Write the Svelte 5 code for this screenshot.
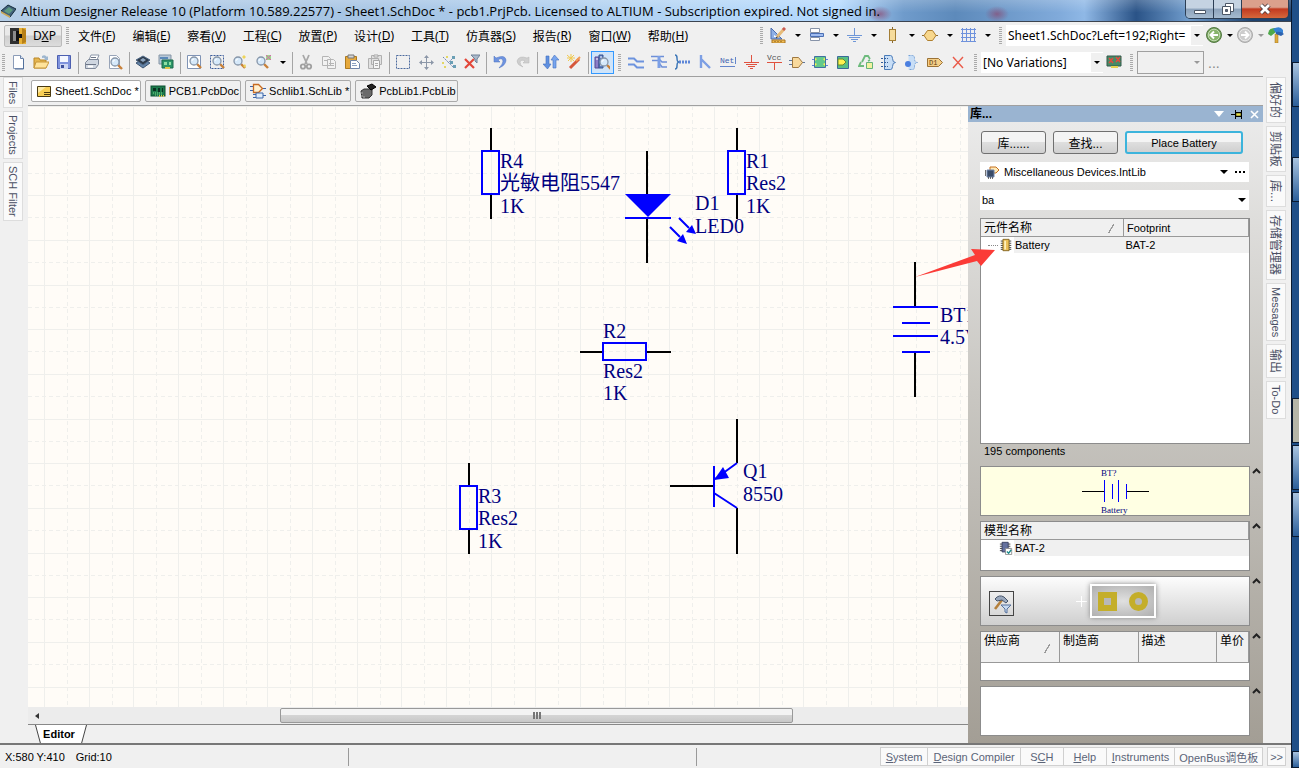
<script>
    const menus = [
        ['文件', 'F'], ['编辑', 'E'], ['察看', 'V'], ['工程', 'C'], ['放置', 'P'], ['设计', 'D'],
        ['工具', 'T'], ['仿真器', 'S'], ['报告', 'R'], ['窗口', 'W'], ['帮助', 'H']
    ];

    const drawTools = ['draft', 'align', 'power', 'resistor', 'opamp', 'grid'];

    const mainTools = [
        'new', 'open', 'save', '|', 'print', 'preview', '|', 'layers', 'board', '|',
        'zoomDoc', 'zoomArea', 'zoomSel', 'zoomFilter', 'v', '|',
        'cut', 'copy', 'paste', 'pasteAll', '|', 'select', 'move', 'deselect', 'clear', '|',
        'undo', 'redo', '|', 'updown', 'wand', '|', 'browse'
    ];

    const wiringTools = [
        'wire', 'bus', 'harness', 'entry', 'net', 'gnd', 'vcc', 'part', 'sheet', 'sheetEntry',
        'device', 'connector', 'connEntry', 'port', 'noErc'
    ];

    const docs = [
        { name: 'Sheet1.SchDoc *', icon: 'docSch', active: true },
        { name: 'PCB1.PcbDoc', icon: 'docPcb' },
        { name: 'Schlib1.SchLib *', icon: 'docSchlib' },
        { name: 'PcbLib1.PcbLib', icon: 'docPcblib' }
    ];

    const leftTabs = ['Files', 'Projects', 'SCH Filter'];
    const rightTabs = ['偏好的', '剪贴板', '库...', '存储管理器', 'Messages', '输出', 'To-Do'];

    // [before, underlined key, after]
    const panels = [
        ['', 'S', 'ystem'], ['', 'D', 'esign Compiler'], ['S', 'C', 'H'],
        ['', 'H', 'elp'], ['', 'I', 'nstruments'], ['OpenBus调色板', '', '']
    ];

    const resistors = [
        { x: 463, y: 22, lines: ['R4', '光敏电阻5547', '1K'] },
        { x: 709, y: 22, lines: ['R1', 'Res2', '1K'] },
        { x: 441, y: 357, lines: ['R3', 'Res2', '1K'] }
    ];

    // 10 grid units are 44.67px on screen at this zoom
    const step = 134 / 3;
    const cols = Array.from({ length: 60 }, (_, i) => i);

    const lens = (x, y) =>
        `<path d="M${x + 3} ${y + 3}l4 4" stroke="#c8803a" stroke-width="2.4"/><circle cx="${x}" cy="${y}" r="4" fill="#d6e9fa" stroke="#8695a8" stroke-width="1.3"/><path d="M${x - 2} ${y}a2 2 0 0 1 2-2" stroke="#fff" fill="none"/>`;
    const pcb = '<rect x="1" y="3" width="14" height="10" fill="#1d7a4c" stroke="#0c5030"/><path d="M3 5h3v3H3zM8 5h2v4H8zM12 5h1v4h-1z" fill="#0a3021"/><path d="M3 10h9M5 12h7" stroke="#7fe08a" stroke-dasharray="1 1"/><path d="M9 13h5" stroke="#d8c34a" stroke-width="2" stroke-dasharray="1 1"/>';

    const icons = {
        draft: '<path d="M1 1v11h11z" fill="#8fb0e6" stroke="#4a6cae"/><path d="M4 8v2h3z" fill="#fff"/><path d="M2 13h13v3H2z" fill="#f3bf55" stroke="#a87524"/><path d="M5 14v1M8 14v1M11 14v1" stroke="#7a5010"/><path d="M7 10l7-8" stroke="#e6bb79" stroke-width="3"/><path d="M13 3l2-2" stroke="#c95b50" stroke-width="3"/><path d="M6 11l1.500-1" stroke="#333"/>',
        align: '<path d="M2.500 1.500h9v4h-9zM2.500 10.500h9v3h-9z" fill="#fff" stroke="#8793a8"/><path d="M2.500 6.500h13v3h-13z" fill="#9fbcf0" stroke="#4a6fb5"/>',
        power: '<path d="M8.500 1v7M1 8.500h15M3 10.500h11M5 12.500h7M7 14.500h3" stroke="#6f97d8" fill="none"/>',
        resistor: '<path d="M8.500 0v16" stroke="#8a6a30"/><rect x="5.500" y="2.500" width="6" height="11" fill="#f6dc9c" stroke="#a37e35"/>',
        opamp: '<path d="M0 8.500h16" stroke="#8a6a30"/><path d="M5.500 3.500h5l3.500 5-3.500 5h-5L2 8.500z" fill="#f8d78c" stroke="#b0802f"/>',
        grid: '<path d="M2.500 1v14M6.500 1v14M10.500 1v14M14.500 1v14M1 2.500h15M1 6.500h15M1 10.500h15M1 14.500h15" stroke="#6f92dc"/>',
        new: '<path d="M3.500 1.500h7l3 3v10h-10z" fill="#fff" stroke="#8b9cb8"/><path d="M10.500 1.500v3h3" fill="#dbe6f5" stroke="#6b82a8"/><path d="M13.500 5v10H5" stroke="#52719c" fill="none"/>',
        open: '<path d="M1 4h5l1 2h6v8H1z" fill="#e5b54f" stroke="#b98728"/><path d="M3 8h13l-3 6H1z" fill="#ffe39a" stroke="#c7963a"/><path d="M9 2q3-2 5 1l1-1v4h-4l1-1q-1-2-3-1z" fill="#9db6cf"/>',
        save: '<path d="M1.500 1.500h13v13h-13z" fill="#7f93dd" stroke="#4c5fb0"/><path d="M4 2h8v6H4z" fill="#f4f7ff"/><path d="M4 10h8v5H4z" fill="#cdd6f2"/><path d="M5 11h3v3H5z" fill="#3d4f9c"/>',
        print: '<path d="M5 6l2-5h8l-2 5z" fill="#fff" stroke="#8b96a8"/><path d="M1.500 8.500l3-3h10v5l-3 4h-10z" fill="#cfd6e0" stroke="#7e8899"/><path d="M2 10.500h10M7 3.500h5" stroke="#6c7586"/><path d="M4 12.500h5" stroke="#fff" stroke-width="2"/>',
        preview: '<path d="M2.500 1.500h7l3 3v10h-10z" fill="#fff" stroke="#98a4b8"/>' + lens(8, 8),
        layers: '<path d="M1 9l7-4 7 4-7 5z" fill="#6484a8" stroke="#3e5674"/><path d="M1 6l7-4 7 4-7 5z" fill="#2e3b4b" stroke="#4f6988"/><path d="M5 6l3-2 3 2-3 2z" fill="#8da5c0"/>',
        board: '<path d="M1 1h12v9H1z" fill="#b8c8d8" stroke="#8595a5"/><path d="M2 4h8" stroke="#5a88b8" stroke-width="2"/><path d="M4 6h11v8H4z" fill="#2c9468" stroke="#1c6a4a"/><path d="M6 8h3v3H6zM11 8h2v3h-2z" fill="#8fe0a4"/><path d="M7 14h5" stroke="#e3c84c" stroke-width="2"/>',
        zoomDoc: '<path d="M1.500 1.500h13v13h-13z" fill="#fff" stroke="#7f93b5"/>' + lens(8, 7),
        zoomArea: '<path d="M1.500 1.500h13v13h-13z" fill="none" stroke="#3e5f9c" stroke-dasharray="2 1"/>' + lens(8, 7),
        zoomSel: lens(6, 7) + '<path d="M12 1l2 2-2 2-2-2zM13 10l1 2-1 2-2-2z" fill="#eed45a"/>',
        zoomFilter: lens(6, 7) + '<path d="M11 1h5v5h-5z" fill="#9ed48b"/><path d="M11 1l5 5M16 1l-5 5" stroke="#d36ba8"/>',
        cut: '<path d="M5 1l4 9M11 1L7 10" stroke="#a8a8a8" stroke-width="1.800"/><circle cx="5" cy="12.500" r="2.200" fill="none" stroke="#a0a0a0" stroke-width="1.800"/><circle cx="11" cy="12.500" r="2.200" fill="none" stroke="#a0a0a0" stroke-width="1.800"/>',
        copy: '<path d="M1.500 2.500h6l2 2v7h-8zM6.500 5.500h6l2 2v7h-8z" fill="#f2f2f2" stroke="#b5b5b5"/><path d="M8 9.500h5M8 11.500h5M3 6.500h3" stroke="#b5b5b5"/>',
        paste: '<path d="M1.500 2.500h11v12h-11z" fill="#e6a93c" stroke="#ad7a20"/><path d="M4 1h6v3H4z" fill="#d5d5d5" stroke="#777"/><path d="M6.500 6.500h6l3 3v5h-9z" fill="#fff" stroke="#7186aa"/><path d="M8 9.500h4M8 11.500h5" stroke="#8ca0c0"/>',
        pasteAll: '<path d="M4.500 1.500h10v9h-10zM1.500 4.500h10v10h-10z" fill="#e2e2e2" stroke="#b0b0b0"/><path d="M7 1h4v2H7zM6.500 6.500h6v8h-6z" fill="#f6f6f6" stroke="#a5a5a5"/><path d="M8 9.500h3M8 11.500h3" stroke="#aaa"/>',
        select: '<path d="M1.500 1.500h13v13h-13z" fill="none" stroke="#4c6b9e" stroke-dasharray="2 1"/>',
        move: '<path d="M8.500 2v13M2 8.500h13" stroke="#8c97a8"/><path d="M6 4l2.500-3L11 4zM6 13l2.500 3 2.500-3zM4 6L1 8.500 4 11zM13 6l3 2.500-3 2.500z" fill="#8c97a8"/>',
        deselect: '<path d="M2 3l11 11M13 3L7 9" stroke="#6d86b4" stroke-dasharray="2 1"/><path d="M1 8h2v2H1zM3 12h2v2H3zM5 2h2v2H5z" fill="#e3d766"/><path d="M11 2h3v3h-3zM12 11h3v3h-3zM9 7h3v3H9z" fill="#6a9fb5"/>',
        clear: '<path d="M1 5l9 9M10 5l-9 9" stroke="#e2473a" stroke-width="2.200"/><path d="M7 1h9l-3 4v4l-2-2V5z" fill="#aab9cb" stroke="#708298"/>',
        undo: '<path d="M2 2v6h6L6 6q4-3 5 1 0 3-4 7 7-3 7-8Q13 0 4 4z" fill="#6e93e0" stroke="#4a70bf" stroke-width=".5"/>',
        redo: '<path d="M14 3v6H8l2-2q-4-2-5 1 0 3 3 5-6-2-6-6 2-6 10-3z" fill="#cfcfcf" stroke="#b5b5b5" stroke-width=".5"/>',
        updown: '<path d="M3 2h3v8h2l-3.500 5L0 10h3z" fill="#6090e0" stroke="#426fc0" stroke-width=".6"/><path d="M10 14h3V6h3l-4.500-5L8 6h2z" fill="#78a5ee" stroke="#426fc0" stroke-width=".6"/>',
        wand: '<path d="M4 14l9-9" stroke="#d5573b" stroke-width="3"/><path d="M10 7l4-4" stroke="#f09a55" stroke-width="2"/><path d="M1 1l7 6M8 1L2 7M5 0v8M1 4h8" stroke="#f0c94e"/>',
        browse: '<path d="M1 3h4v11H1z" fill="#8a7fc8" stroke="#554a94"/><path d="M5 1h4v13H5z" fill="#5c7fc4" stroke="#39568f"/><path d="M2 5h2M6 3h2M6 11h2" stroke="#fff"/>' + lens(10, 8),
        wire: '<path d="M0 4.500h6l3 3h7M0 10.500h6l3 3h7" stroke="#6d93de" stroke-width="2" fill="none"/>',
        bus: '<path d="M0 2.500h13M1 6.500h7M8 5l3 3h5M8 9l3 4h5" stroke="#6d8fd8" stroke-width="1.500" fill="none"/><path d="M8 2v12" stroke="#7da0e6" stroke-width="3"/>',
        harness: '<path d="M1 1q2 0 2 3 0 4 2 4-2 0-2 4 0 3-2 3" stroke="#3f78b8" stroke-width="1.500" fill="none"/><path d="M5 8h11" stroke="#5d86d8" stroke-width="3" stroke-dasharray="2 1"/>',
        entry: '<path d="M4 1v13M4 5l9 9" stroke="#7d9fe4" stroke-width="2.400"/>',
        net: '<text x="0" y="9" font-family="Liberation Mono" font-size="8" fill="#3e62b0">Net</text><path d="M15.500 3v7M0 12.500h15" stroke="#6485cb"/>',
        gnd: '<path d="M8.500 1v7M1 8.500h15M3 10.500h11M5 12.500h7M7 14.500h3" stroke="#e0523f"/>',
        vcc: '<text x="1" y="6" font-family="Liberation Mono" font-size="8" fill="#555">Vcc</text><path d="M1 8.500h15M8.500 9v7" stroke="#e0523f"/>',
        part: '<path d="M0 6.500h4M0 10.500h4M12 8.500h4" stroke="#5f779c"/><path d="M3.500 3.500h6l4 5-4 5h-6z" fill="#f8d99c" stroke="#9f7840"/>',
        sheet: '<path d="M0 5.500h16M0 11.500h16" stroke="#5d86d8"/><path d="M2.500 2.500h11v11h-11z" fill="#62c98b" stroke="#41719f"/><path d="M3 4l2 1-2 2zM3 9l2 1-2 2zM13 4l-2 1 2 2zM13 9l-2 1 2 2z" fill="#fff24f"/>',
        sheetEntry: '<path d="M2.500 2.500h11v12h-11z" fill="#58c084" stroke="#3b6a99"/><path d="M3 5h5l3 3-3 3H3z" fill="#fff24f" stroke="#6a8a30"/>',
        device: '<path d="M4 8l3-6h3l2 3M3 8l-2 4h5M12 6l-2 1" stroke="#6dbb7d" stroke-width="1.800" fill="none"/><path d="M8.500 8.500h6v6h-6z" fill="#f2f2a0" stroke="#64b478"/>',
        connector: '<path d="M3.500 1.500h6q2 0 2 3 0 4 3 4-3 0-3 4 0 3-2 3h-6z" fill="#c8def6" stroke="#4a7cba"/><path d="M0 4.500h7M0 8.500h7M0 12.500h7" stroke="#345f9c" stroke-dasharray="2 1"/>',
        connEntry: '<path d="M4.500 1.500h4q2 0 2 3 0 4 3 4-3 0-3 4 0 3-2 3h-4" fill="#c8def6" stroke="#78a2d6" stroke-dasharray="2 1"/><circle cx="4" cy="10" r="3" fill="#4b7fe0"/>',
        port: '<path d="M.5 4.500h11l4 4-4 4H.5z" fill="#f5cf88" stroke="#9b7236"/><text x="2" y="11" font-family="Liberation Mono" font-size="7" fill="#5c3d10">D1</text>',
        noErc: '<path d="M3 3l10 11M13 3L3 14" stroke="#ea5a49" stroke-width="1.400"/>',
        variant: '<path d="M1 2h14v10H1z" fill="#478b66" stroke="#33594a"/><path d="M3 4l4 5M7 4l-4 5M10 3l4 5M14 3l-4 5" stroke="#e0493f" stroke-width="1.500"/><path d="M5 13h7" stroke="#e5d050" stroke-width="2"/>',
        docSch: '<path d="M1.500 3.500h13v10h-13z" fill="#f9cf55" stroke="#4a3a10"/><path d="M2 4h8L2 10z" fill="#fdeaa6"/><path d="M8 9.500h6M8 11.500h6" stroke="#4a3a10"/>',
        docPcb: pcb,
        docSchlib: '<path d="M0 3.500h4M0 7.500h4M12 5.500h4" stroke="#3c66a8"/><path d="M3.500 1.500h5l4 4-4 4h-5z" fill="#fff1d0" stroke="#c76a20" stroke-width="1.300"/><path d="M6 10h7v5H6z" fill="#e0edfb" stroke="#3c66a8"/><path d="M3 11.500h3M13 12.500h3M3 14.500h3" stroke="#3c66a8"/>',
        docPcblib: '<path d="M1 8l3-2h8v6l-3 3H2z" fill="#6a6a6a" stroke="#333"/><path d="M7 3l5-2 4 3-5 3z" fill="#222" stroke="#000"/><path d="M1 10h2M1 13h2M4 15v-2" stroke="#aaa"/>',
        intlib: '<path d="M6 3h6l3 3-3 3H6z" fill="#ffeab8" stroke="#c5711f"/><path d="M3 6h7v7H3z" fill="#3b4c68" stroke="#7085aa"/><path d="M1 7h1M1 9h1M1 11h1M4 14h1M6 14h1M8 14h1" stroke="#444" stroke-width="1.500"/>',
        chip: '<path d="M2 3.500h12M2 6h12M2 8.500h12M2 11h12M2 13h12" stroke="#333"/><path d="M4.500 1.500h7v13h-7z" fill="#ecc15a" stroke="#7d5b18"/><path d="M6 3h2v10H6z" fill="#fff0bd"/>',
        footprint: '<path d="M1 3.500h12M1 6h12M1 8.500h12M1 11h8" stroke="#333"/><path d="M3.500 1.500h7v11h-7z" fill="#64719e" stroke="#333b5c"/><path d="M7.500 8.500h7v7h-7z" fill="#fff" stroke="#8a8a8a"/><path d="M9 12l2 2 3-4" stroke="#1b8a8a" stroke-width="1.500" fill="none"/>',
        hammer: '<path d="M4 16l7-9" stroke="#b5803c" stroke-width="2.600"/><path d="M4 6q4-5 9-2l4 4-2 2-4-3-5 1z" fill="#9aa8bd" stroke="#47556b"/><path d="M10 12h10l-4 4v4l-2-1v-3z" fill="#c7daf1" stroke="#56719c"/>',
        logo: '<path d="M1 8l7-6 8 4-6 8z" fill="#42627c" stroke="#152c3a"/><path d="M4 8l5-4 4 3-4 4z" fill="#5e9a80"/><path d="M1 8l9 5v2L1 10z" fill="#c8a85b"/>',
        dxp: '<path d="M0 0h9v16H0z" fill="#303030"/><path d="M9 0h7v16H9z" fill="#e7b035"/><path d="M3 3h5v3h3v4H8v3H3z" fill="#8b8b8b"/><path d="M6 3h3v3h3v4H9v3H6z" fill="#111"/><path d="M12 0l4 2v12l-4 2z" fill="#b78018"/>',
        back: '<circle cx="8" cy="8" r="7.500" fill="#709d57" stroke="#557a45"/><circle cx="8" cy="8" r="5.800" fill="#88b46b" stroke="#c3dbb4"/><path d="M12 8H5M8 4.500L4.500 8 8 11.500" stroke="#fff" stroke-width="2" fill="none"/>',
        forward: '<circle cx="8" cy="8" r="7.500" fill="#c4c4c4" stroke="#aaa"/><circle cx="8" cy="8" r="5.800" fill="#cdcdcd" stroke="#e8e8e8"/><path d="M4 8h7M8 4.500l3.500 3.500L8 11.500" stroke="#fff" stroke-width="2" fill="none"/>',
        palm: '<path d="M7 7h3v9H7z" fill="#e0ab3c" stroke="#9a701c" stroke-width=".5"/><path d="M8 1Q1 0 0 7l3 2 5-4z" fill="#4ea84a"/><path d="M5 2q7-4 10 1v3H8z" fill="#3683d6"/><path d="M8 5q5-1 8 2l-3 2-5-2z" fill="#2c62ae"/>'
    };
</script>

{#snippet icon(name)}
    <svg class="icon" viewBox="0 0 16 16" aria-hidden="true">{@html icons[name]}</svg>
{/snippet}

{#snippet chevron()}
    <button class="collapse" aria-label="Collapse"><svg width="9" height="6"><path d="M1 5l3.500-3.500L8 5" fill="none" stroke="#222" stroke-width="2" /></svg></button>
{/snippet}

<div class="screen">
    <div class="window">
        <header class="titlebar">
            {@render icon('logo')}
            <h1>Altium Designer Release 10 (Platform 10.589.22577) - Sheet1.SchDoc * - pcb1.PrjPcb. Licensed to ALTIUM - Subscription expired. Not signed in.</h1>
            <div class="sysbuttons">
                <button aria-label="Minimize"><svg width="14" height="14"><path d="M1.500 8.500h11v3h-11z" fill="#fff" stroke="#4b5666" /></svg></button>
                <button aria-label="Restore"><svg width="14" height="14"><path d="M4.500 1.500h8v8h-8z" fill="#fff" stroke="#4b5666" /><path d="M1.500 4.500h8v8h-8z" fill="#fff" stroke="#4b5666" /><path d="M4.500 7.500h2v2h-2z" fill="#667" stroke="#4b5666" /></svg></button>
                <button class="close" aria-label="Close"><svg width="14" height="14"><path d="M3 3l8 8M11 3l-8 8" stroke="#4b3a3a" stroke-width="4.500" /><path d="M3 3l8 8M11 3l-8 8" stroke="#fff" stroke-width="2.800" /></svg></button>
            </div>
        </header>

        <div class="menubar">
            <button class="dxp">{@render icon('dxp')}<span>D<u>X</u>P</span></button>
            <span class="grip"></span>
            <nav>
                {#each menus as [label, key]}
                    <button>{label}(<u>{key}</u>)</button>
                {/each}
            </nav>
            <div class="navtools">
                <span class="grip"></span>
                {#each drawTools as name}
                    <button class="tool" aria-label={name}>{@render icon(name)}</button>
                    <button class="caret" aria-label="{name} options"></button>
                {/each}
                <span class="grip"></span>
                <div class="combo address">
                    <input value="Sheet1.SchDoc?Left=192;Right=" aria-label="Address" />
                    <button class="caret" aria-label="History"></button>
                </div>
                <button class="tool" aria-label="Back">{@render icon('back')}</button>
                <button class="caret small" aria-label="Back list"></button>
                <button class="tool" aria-label="Forward">{@render icon('forward')}</button>
                <button class="caret small off" aria-label="Forward list"></button>
                <button class="tool" aria-label="Home">{@render icon('palm')}</button>
            </div>
        </div>

        <div class="toolbar">
            <span class="grip"></span>
            {#each mainTools as name}
                {#if name === '|'}
                    <span class="sep"></span>
                {:else if name === 'v'}
                    <button class="caret" aria-label="Zoom options"></button>
                {:else}
                    <button class="tool" class:pressed={name === 'browse'} aria-label={name}>{@render icon(name)}</button>
                {/if}
            {/each}
            <span class="grip"></span>
            {#each wiringTools as name}
                <button class="tool" aria-label={name}>{@render icon(name)}</button>
            {/each}
            <span class="grip"></span>
            <div class="combo variations">
                <input value="[No Variations]" aria-label="Variations" />
                <button class="caret" aria-label="Choose variation"></button>
            </div>
            <button class="tool" aria-label="variant">{@render icon('variant')}</button>
            <span class="grip"></span>
            <div class="combo disabled">
                <input disabled aria-label="Filter" />
                <button class="caret off" disabled aria-label="Choose filter"></button>
            </div>
            <button class="more">...</button>
        </div>

        <div class="workspace">
            <aside class="side">
                {#each leftTabs as tab}
                    <button>{tab}</button>
                {/each}
            </aside>

            <div class="center">
                <div class="doctabs">
                    {#each docs as doc}
                        <button class:active={doc.active}>{@render icon(doc.icon)}{doc.name}</button>
                    {/each}
                </div>

                <div class="split">
                    <main>
                        <svg class="sheet">
                            {#each cols as i}
                                <path class="line" d="M{Math.round(16 + i * step) + 0.5} 0v2000M0 {Math.round(i * step) + 0.5}h3000" />
                                <path class="line dashed" d="M{Math.round(39 + i * step) + 0.5} 0v2000M0 {Math.round(22 + i * step) + 0.5}h3000" />
                            {/each}

                            {#each resistors as r}
                                <g transform="translate({r.x} {r.y})">
                                    <path class="pin" d="M0 0v23M0 66v25" />
                                    <rect class="body" x="-9" y="23" width="17" height="43" />
                                    {#each r.lines as line, i}
                                        <text x="9" y={40 + Math.round(i * 22.4)}>{line}</text>
                                    {/each}
                                </g>
                            {/each}

                            <path class="pin" d="M552 246h23M618 246h25" />
                            <rect class="body" x="575" y="237" width="43" height="17" />
                            <text x="575" y="232">R2</text>
                            <text x="575" y="272">Res2</text>
                            <text x="575" y="294">1K</text>

                            <!-- LED -->
                            <path class="pin" d="M619 45v43M619 112v45" />
                            <path class="fill" d="M597 88h46l-23 23z" />
                            <path class="body" d="M597 112h46M651 112l10 10M642 121l10 10" />
                            <path class="fill" d="M668 128l-10-2 6-7zM659 138l-10-3 6-7z" />
                            <text x="667" y="104">D1</text>
                            <text x="667" y="127">LED0</text>

                            <!-- transistor -->
                            <path class="pin" d="M709 313v44M709 402v46M642 380h44" />
                            <path class="body" d="M686 360v41M709 357l-22 16M686 387l23 15" />
                            <path class="fill" d="M686 374l9-13 6 11z" />
                            <text x="715" y="372">Q1</text>
                            <text x="715" y="395">8550</text>

                            <!-- battery -->
                            <path class="pin" d="M887 156v44M887 246v45" />
                            <path class="body" d="M865 201h45M874 217h28M865 230h45M874 246h28" />
                            <text x="912" y="216">BT1</text>
                            <text x="912" y="238">4.5V</text>
                        </svg>
                        <div class="scroll">
                            <button aria-label="Scroll left"><svg width="4" height="6"><path d="M4 0v6L0 3z" fill="#333" /></svg></button>
                            <div class="thumb"><i></i><i></i><i></i></div>
                        </div>
                        <div class="editors">
                            <svg width="52" height="19"><path d="M.5 0l5 18.500h41L51.500 0" fill="#fff" stroke="#444" /></svg>
                            <button>Editor</button>
                        </div>
                    </main>

                    <section class="library">
                        <div class="caption">
                            <h2>库...</h2>
                            <button aria-label="Panel menu"><svg width="10" height="6"><path d="M0 0h10L5 6z" fill="#fff" /></svg></button>
                            <button aria-label="Pin"><svg width="12" height="9"><path d="M0 4.500h4M4.500 0v9M4.500 2.500h6M4.500 6.500h6M10.500 0v9" fill="none" stroke="#000" /><path d="M5 3h5v3H5z" fill="#e8e04a" stroke="#000" stroke-width=".5" /></svg></button>
                            <button aria-label="Close panel"><svg width="9" height="9"><path d="M1 1l7 7M8 1L1 8" stroke="#fff" stroke-width="1.600" /></svg></button>
                        </div>
                        <div class="libbody">
                            <div class="actions">
                                <button>库......</button>
                                <button>查找...</button>
                                <button class="place">Place Battery</button>
                            </div>
                            <div class="field">
                                {@render icon('intlib')}
                                <input value="Miscellaneous Devices.IntLib" aria-label="Library" />
                                <button class="caret" aria-label="Choose library"></button>
                                <button class="dots" aria-label="More"></button>
                            </div>
                            <div class="field filter">
                                <input value="ba" aria-label="Mask" />
                                <button class="caret" aria-label="Recent masks"></button>
                            </div>
                            <div class="box parts">
                                <table>
                                    <thead><tr><th>元件名称<span class="sort"></span></th><th>Footprint</th></tr></thead>
                                    <tbody><tr><td class="node"><i class="branch"></i>{@render icon('chip')}<span>Battery</span></td><td class="hit">BAT-2</td></tr></tbody>
                                </table>
                            </div>
                            <p>195 components</p>
                            <div class="section">
                                <div class="box symbol">
                                    <svg width="70" height="48">
                                        <path d="M2 24.500h22M46 24.500h23" stroke="#000" />
                                        <path d="M24.500 13v22M32.500 17v15M38.500 13v22M46.500 17v15" stroke="#00f" />
                                        <text x="21" y="9">BT?</text>
                                        <text x="21" y="46">Battery</text>
                                    </svg>
                                </div>
                                {@render chevron()}
                            </div>
                            <div class="section">
                                <div class="box">
                                    <table>
                                        <thead><tr><th>模型名称</th></tr></thead>
                                        <tbody><tr><td class="node"><i class="branch none"></i>{@render icon('footprint')}<span>BAT-2</span></td></tr></tbody>
                                    </table>
                                </div>
                                {@render chevron()}
                            </div>
                            <div class="section">
                                <div class="box model">
                                    <button aria-label="Model tools"><svg width="22" height="22">{@html icons.hammer}</svg></button>
                                    <svg class="plus" width="11" height="11"><path d="M5.500 0v11M0 5.500h11" stroke="#fff" /></svg>
                                    <div class="pads"><i class="square"></i><i></i></div>
                                </div>
                                {@render chevron()}
                            </div>
                            <div class="section">
                                <div class="box">
                                    <table class="suppliers">
                                        <thead><tr><th>供应商<span class="sort"></span></th><th>制造商</th><th>描述</th><th>单价</th></tr></thead>
                                    </table>
                                </div>
                                {@render chevron()}
                            </div>
                            <div class="section">
                                <div class="box"></div>
                                {@render chevron()}
                            </div>
                        </div>
                        <svg class="pointer" width="80" height="40"><path d="M0 31L60 9l-4-6 24 1-14 16-4-5z" fill="#fb3b37" /></svg>
                    </section>
                </div>
            </div>

            <aside class="side right">
                {#each rightTabs as tab}
                    <button class:cjk={tab > '一'}>{tab}</button>
                {/each}
            </aside>
        </div>

        <footer>
            <span class="coords">X:580 Y:410</span>
            <span class="snap">Grid:10</span>
            <span class="message"></span>
            <div class="panels">
                {#each panels as [before, key, after]}
                    <button>{before}<u>{key}</u>{after}</button>
                {/each}
            </div>
            <button class="expand">&gt;&gt;</button>
        </footer>
    </div>
    <div class="desktop">
        <i class="h1"></i><i class="h2"></i><i class="h3"></i><i class="h4"></i><i class="h5"></i><i class="h6"></i>
    </div>
</div>

<style>
    :global(body) {
        margin: 0;
        background: #f0f0f0;
    }
    .screen {
        display: flex;
        height: 100vh;
        overflow: hidden;
        font-family: "Liberation Sans", "Noto Sans CJK SC", sans-serif;
        font-size: 11px;
        color: #000;
    }
    .window {
        flex: 1;
        min-width: 0;
        display: flex;
        flex-direction: column;
        background: #f0f0f0;
    }
    button, input {
        font: inherit;
        color: inherit;
        margin: 0;
        padding: 0;
        border: 0;
        background: none;
        min-width: 0;
    }
    button {
        display: flex;
        align-items: center;
        justify-content: center;
        flex-shrink: 0;
        white-space: pre;
    }
    svg {
        display: block;
        flex-shrink: 0;
    }
    .icon {
        width: 16px;
        height: 16px;
    }

    /* Title bar */
    .titlebar {
        display: flex;
        align-items: center;
        height: 21px;
        border-bottom: 1px solid #3c4450;
        padding-right: 2px;
        background:
            radial-gradient(ellipse 12px 8px at 880px 14px, rgba(138, 74, 114, 0.7) 0%, transparent 100%),
            radial-gradient(ellipse 12px 8px at 997px 14px, rgba(138, 74, 114, 0.7) 0%, transparent 100%),
            linear-gradient(rgba(255, 255, 255, 0.2), rgba(255, 255, 255, 0) 60%),
            linear-gradient(90deg, #b4cde6 0%, #a5c4e4 30%, #b2d3f3 50%, #b5daff 65%, #6f9bcb 70%, #5d8abb 74%, #80aada 82%, #8fb8e6 84%, #2a5387 88%, #6f9bcb 92%, #1d426f 97%);
    }
    .titlebar h1 {
        flex: 1;
        margin: 0 0 0 5px;
        font: 13px "Open Sans", "Noto Sans CJK SC", sans-serif;
        white-space: nowrap;
    }
    .sysbuttons {
        display: flex;
        align-self: flex-start;
        height: 18px;
        border: 1px solid #2c3e54;
        border-top: 0;
        border-radius: 0 0 5px 5px;
        overflow: hidden;
    }
    .sysbuttons button {
        width: 28px;
        border-right: 1px solid #2c3e54;
        background: linear-gradient(#c5d3e2 45%, #8ca2bb 50%, #a6bbd0);
    }
    .sysbuttons .close {
        width: 46px;
        border: 0;
        background: linear-gradient(#dba08c 40%, #c23a20 50%, #d6683c);
    }

    /* Menu and tool bars */
    .menubar, .toolbar, .navtools, .menubar nav {
        display: flex;
        align-items: center;
    }
    .menubar {
        height: 27px;
        padding: 0 3px 0 4px;
        font-family: "Noto Sans", "Noto Sans CJK SC", sans-serif;
        font-size: 12px;
    }
    .menubar nav {
        gap: 17px;
        flex: 1;
        margin-left: 5px;
    }
    .dxp {
        width: 58px;
        height: 22px;
        gap: 7px;
        border: 1px solid #bbb;
        border-radius: 2px;
        background: linear-gradient(#e9e9e9 45%, #cfcfcf 50%, #dcdcdc);
    }
    .grip {
        flex: 0 0 11px;
        height: 18px;
        background: repeating-linear-gradient(#aaa 0 1px, #f0f0f0 1px 2px) center / 3px 100% no-repeat;
    }
    .tool {
        box-sizing: border-box;
        align-items: flex-start;
        justify-content: flex-start;
        width: 23px;
        height: 23px;
        padding: 3px 0 0 3px;
    }
    .tool.pressed {
        padding: 2px 0 0 2px;
        border: 1px solid #3399ff;
        background: #cfe4f9;
    }
    .caret {
        width: 15px;
        height: 16px;
    }
    .caret::before {
        content: "";
        border: 3px solid transparent;
        border-top-color: #000;
        border-bottom: 0;
    }
    .caret.small {
        width: 8px;
    }
    .caret.off::before {
        border-top-color: #999;
    }
    .combo {
        display: flex;
        align-items: center;
        height: 21px;
        background: #fff;
        font-family: "Noto Sans", sans-serif;
    }
    .combo .caret {
        width: 12px;
        height: 19px;
        background: #f0f0f0;
    }
    .combo input {
        flex: 1;
        width: 0;
        padding-left: 2px;
    }
    .address {
        width: 197px;
        font-size: 12px;
    }
    .toolbar {
        height: 27px;
        border-bottom: 1px solid #a0a0a0;
        padding-right: 28px;
        margin-right: 28px;
    }
    .toolbar .grip:first-child {
        flex-basis: 7px;
    }
    .sep {
        flex: 0 0 5px;
        height: 22px;
        background: linear-gradient(#a5a5a5, #a5a5a5) center / 1px 100% no-repeat;
    }
    .variations {
        width: 122px;
        font-size: 12px;
    }
    .disabled {
        width: 65px;
        border: 1px solid #a0a0a0;
        background: #f0f0f0;
    }
    .more {
        margin-left: 4px;
        font-size: 14px;
        color: #888;
    }

    /* Workspace */
    .workspace {
        flex: 1;
        min-height: 0;
        display: flex;
    }
    .side {
        flex: 0 0 25px;
        display: flex;
        flex-direction: column;
        align-items: flex-start;
        gap: 3px;
        padding-left: 3px;
    }
    .side button {
        writing-mode: vertical-rl;
        text-orientation: sideways;
        box-sizing: border-box;
        width: 20px;
        padding: 3px 0;
        border: 1px solid #ddd;
        background: #fafafa;
        color: #4a5064;
    }
    .side .cjk {
        padding: 4px 0;
        font-size: 12px;
    }
    .center {
        flex: 1;
        min-width: 0;
        display: flex;
        flex-direction: column;
    }
    .doctabs {
        display: flex;
        align-items: center;
        gap: 4px;
        height: 28px;
        padding-left: 3px;
        border-bottom: 1px solid #a0a0a0;
    }
    .doctabs button {
        height: 22px;
        padding: 0 1px 0 4px;
        gap: 3px;
        border: 1px solid #aaa;
        border-radius: 2px;
        box-sizing: border-box;
    }
    .doctabs .active {
        background: #fff;
    }
    .split {
        flex: 1;
        min-height: 0;
        display: flex;
    }
    main {
        flex: 1;
        min-width: 0;
        display: flex;
        flex-direction: column;
    }
    .sheet {
        flex: 1;
        width: 100%;
        min-height: 0;
        background: #fffcf7;
    }
    .line {
        fill: none;
        stroke: #efefec;
    }
    .dashed {
        stroke-dasharray: 4 3;
    }
    .pin {
        stroke: #000;
        stroke-width: 2;
    }
    .body {
        fill: none;
        stroke: #00f;
        stroke-width: 2;
    }
    .fill {
        fill: #00f;
    }
    .sheet text {
        font: 20px "Liberation Serif", "Noto Sans CJK SC", serif;
        fill: #000080;
    }
    .scroll {
        display: flex;
        align-items: center;
        height: 17px;
        background: #ececec;
    }
    .scroll button {
        width: 17px;
        height: 17px;
    }
    .thumb {
        display: flex;
        align-items: center;
        justify-content: center;
        gap: 1px;
        width: 54.4%;
        height: 13px;
        margin-left: 25%;
        border: 1px solid #999;
        border-radius: 2px;
        background: linear-gradient(#f3f3f3 45%, #d4d4d4 50%, #c8c8c8);
    }
    .thumb i {
        width: 2px;
        height: 7px;
        background: #777;
    }
    .editors {
        display: grid;
        justify-content: start;
        height: 18px;
        padding-left: 7px;
        border-top: 1px solid #888;
    }
    .editors svg, .editors button {
        grid-area: 1 / 1;
    }
    .editors button {
        height: 17px;
        font-weight: bold;
        padding-right: 4px;
    }

    /* Library panel */
    .library {
        position: relative;
        flex: 0 0 295px;
        display: flex;
        flex-direction: column;
        background: linear-gradient(#ececec, #c9c7c2 45%, #a39e95);
    }
    .caption {
        display: flex;
        align-items: center;
        gap: 7px;
        height: 16px;
        padding: 0 4px 0 2px;
        background: #9ab4d1;
    }
    .caption h2 {
        flex: 1;
        margin: 0;
        font-size: 12px;
        line-height: 16px;
    }
    .libbody {
        flex: 1;
        min-height: 0;
        display: flex;
        flex-direction: column;
        padding: 9px 0 7px 12px;
    }
    .actions {
        display: flex;
        gap: 7px;
        padding-left: 1px;
        padding-right: 20px;
    }
    .actions button {
        box-sizing: border-box;
        width: 65px;
        height: 23px;
        border: 1px solid #707070;
        border-radius: 3px;
        background: linear-gradient(#f4f4f4 45%, #dedede 50%, #d0d0d0);
        font-size: 12px;
    }
    .actions .place {
        flex: 1;
        border: 2px solid #3cb4dc;
        font-size: 11px;
    }
    .field {
        display: flex;
        align-items: center;
        height: 20px;
        margin: 8px 14px 0 0;
        padding-left: 4px;
        background: #fff;
    }
    .field input {
        flex: 1;
        width: 0;
        padding-left: 4px;
    }
    .filter {
        padding-left: 0;
    }
    .filter input {
        padding-left: 2px;
    }
    .field .caret::before {
        border-width: 4px 4px 0;
    }
    .dots {
        width: 18px;
    }
    .dots::before {
        content: "";
        width: 10px;
        height: 2px;
        background: repeating-linear-gradient(90deg, #000 0 2px, transparent 2px 4px);
    }
    .box {
        flex: 1;
        min-width: 0;
        box-sizing: border-box;
        height: 50px;
        border: 1px solid #8c8c8c;
        background: #fff;
    }
    .parts {
        height: auto;
        margin: 8px 13px 0 0;
    }
    .libbody p {
        margin: 0 0 0 4px;
        line-height: 15px;
        padding-bottom: 7px;
    }
    .section {
        display: flex;
        align-items: flex-start;
        margin-bottom: 5px;
    }
    .section:last-child {
        margin-bottom: 0;
    }
    .collapse {
        width: 13px;
        height: 10px;
    }
    table {
        width: 100%;
        border-collapse: collapse;
        table-layout: fixed;
    }
    th {
        height: 17px;
        padding: 0 0 0 3px;
        border-right: 1px solid #999;
        border-bottom: 1px solid #999;
        background: #f0f0f0;
        text-align: left;
        font-weight: normal;
        line-height: 16px;
        white-space: nowrap;
    }
    .parts th:first-child {
        width: 139px;
    }
    th:not(:last-child), th:only-child {
        font-size: 12px;
    }
    td {
        height: 16px;
        padding: 0 0 0 2px;
        line-height: 16px;
    }
    .hit, .node span {
        background: #f0f0f0;
    }
    .node {
        display: flex;
        align-items: center;
        padding: 0;
    }
    .node span {
        flex: 1;
        height: 16px;
        margin-left: 1px;
        padding-left: 1px;
        line-height: 17px;
    }
    .node .icon {
        width: 14px;
        height: 14px;
    }
    .branch {
        width: 10px;
        margin: 0 1px 0 7px;
        border-top: 1px dotted #888;
    }
    .branch.none {
        border-color: transparent;
    }
    .sort {
        float: right;
        width: 6px;
        height: 9px;
        margin: 4px 9px 0 0;
        background: linear-gradient(120deg, transparent 45%, #999 46% 58%, transparent 59%);
    }
    .symbol {
        display: flex;
        justify-content: center;
        background: #ffffe3;
    }
    .symbol text {
        font: 9px "Liberation Serif", serif;
        fill: #000080;
    }
    .model {
        display: flex;
        align-items: center;
        padding: 0 93px 0 8px;
        background: linear-gradient(#fdfdfd, #cfcfcf);
    }
    .model button {
        width: 25px;
        height: 25px;
        box-sizing: border-box;
        border: 1px solid #444;
        margin-top: 5px;
    }
    .plus {
        margin-left: auto;
    }
    .pads {
        display: flex;
        align-items: center;
        justify-content: space-around;
        width: 62px;
        height: 30px;
        margin-left: 3px;
        border: 2px solid #fff;
        background: radial-gradient(#e0e0e0, #b0b0b0);
        box-shadow: 0 0 5px #888;
    }
    .pads i {
        width: 7px;
        height: 7px;
        border: 6px solid #c4ae2a;
        border-radius: 50%;
        background: #b8b8b8;
    }
    .pads .square {
        border-radius: 0;
    }
    .suppliers th {
        height: 29px;
        padding-bottom: 1px;
        vertical-align: top;
        line-height: 19px;
        font-size: 12px;
    }
    .suppliers th:last-child {
        width: 28px;
    }
    .suppliers .sort {
        margin-top: 12px;
    }
    .pointer {
        position: absolute;
        left: -53px;
        top: 140px;
    }

    /* Status bar */
    footer {
        display: flex;
        align-items: center;
        height: 23px;
        padding: 0 5px;
        border-top: 2px solid #777;
    }
    .snap {
        flex: 0 0 272px;
        margin-left: 11px;
        line-height: 18px;
        border-right: 1px solid #999;
    }
    .message {
        flex: 0 0 347px;
        height: 18px;
        border-right: 1px solid #999;
    }
    .panels {
        display: flex;
        margin-left: auto;
    }
    .panels button, .expand {
        box-sizing: border-box;
        height: 19px;
        min-width: 43px;
        padding: 0 5px;
        border: 1px solid #d0d0d0;
        border-left-width: 0;
        background: #fafafa;
        color: #5a6478;
    }
    .panels button:first-child {
        border-left-width: 1px;
    }
    .panels button:last-child {
        padding: 0 4px;
    }
    .panels .expand, .expand {
        min-width: 0;
        margin-left: 4px;
        padding: 0 2px;
        border-left-width: 1px;
    }

    /* Slice of the desktop behind the window */
    .desktop {
        flex: 0 0 7px;
        display: flex;
        flex-direction: column;
        border-left: 1px solid #0a1a30;
        background: #1f4f88;
    }
    .desktop i {
        height: 43px;
        border: 1px solid #0a1a30;
        border-right: 0;
        background: linear-gradient(#a9c4e0, #2c5f9a);
    }
    .desktop .h1 {
        margin-top: 62px;
    }
    .desktop .h2 {
        margin-top: 50px;
    }
    .desktop .h3 {
        margin-top: 196px;
        background: #b5b6a8;
    }
    .desktop .h4, .desktop .h5 {
        margin-top: 2px;
    }
    .desktop .h6 {
        margin-top: auto;
        height: 15px;
    }
</style>
